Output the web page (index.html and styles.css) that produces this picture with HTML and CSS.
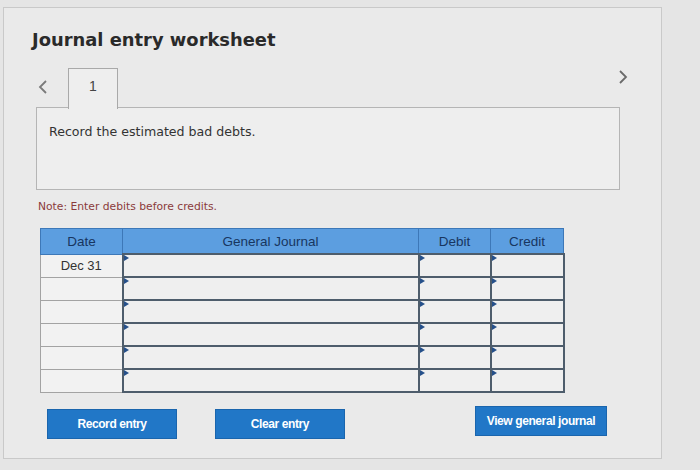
FILE: index.html
```html
<!DOCTYPE html>
<html>
<head>
<meta charset="utf-8">
<link rel="stylesheet" href="styles.css">
</head>
<body>
<div class="panel">
  <h1 class="title">Journal entry worksheet</h1>
  <div class="inner">
    <div class="tabrow">
      <span class="arrow arrow-left"><svg width="10" height="16" viewBox="0 0 10 16"><path d="M8 2 L2 8 L8 14" fill="none" stroke="#7a7a7a" stroke-width="1.8"/></svg></span>
      <div class="tab">1</div>
      <span class="arrow arrow-right"><svg width="10" height="16" viewBox="0 0 10 16"><path d="M2 2 L8 8 L2 14" fill="none" stroke="#6a6a6a" stroke-width="1.8"/></svg></span>
    </div>
    <div class="prompt">Record the estimated bad debts.</div>
    <div class="note">Note: Enter debits before credits.</div>
    <table class="journal">
      <thead>
        <tr><th class="c-date">Date</th><th class="c-gj">General Journal</th><th class="c-dr">Debit</th><th class="c-cr">Credit</th></tr>
      </thead>
      <tbody>
        <tr><td class="date">Dec 31</td><td class="inp"></td><td class="inp"></td><td class="inp"></td></tr>
        <tr><td class="date"></td><td class="inp"></td><td class="inp"></td><td class="inp"></td></tr>
        <tr><td class="date"></td><td class="inp"></td><td class="inp"></td><td class="inp"></td></tr>
        <tr><td class="date"></td><td class="inp"></td><td class="inp"></td><td class="inp"></td></tr>
        <tr><td class="date"></td><td class="inp"></td><td class="inp"></td><td class="inp"></td></tr>
        <tr><td class="date"></td><td class="inp"></td><td class="inp"></td><td class="inp"></td></tr>
      </tbody>
    </table>
    <div class="buttons">
      <button class="btn">Record entry</button>
      <button class="btn">Clear entry</button>
      <button class="btn btn-view">View general journal</button>
    </div>
  </div>
</div>
</body>
</html>
```
FILE: styles.css
```css
html, body {
  margin: 0;
  padding: 0;
}
body {
  background: #e5e5e5;
  width: 700px;
  height: 470px;
  overflow: hidden;
  font-family: "DejaVu Sans", Verdana, sans-serif;
}
.panel {
  box-sizing: border-box;
  margin: 7px 0 0 3px;
  width: 659px;
  height: 452px;
  border: 1px solid #c9c9c9;
  background: #eaeaea;
}
.title {
  margin: 0;
  padding: 20px 0 0 28px;
  font-size: 17.9px;
  line-height: 24px;
  font-weight: bold;
  color: #2a2a2a;
}
.inner {
  padding-left: 32px;
}
.tabrow {
  display: flex;
  align-items: center;
  margin-top: 15px;
  height: 40px;
  width: 600px;
}
.arrow {
  display: flex;
}
.arrow-left {
  width: 32px;
  padding-left: 2px;
  box-sizing: border-box;
}
.arrow-right {
  margin-left: auto;
  align-self: flex-start;
  margin-top: 2px;
  margin-right: 8px;
}
.tab {
  position: relative;
  z-index: 1;
  box-sizing: border-box;
  width: 50px;
  height: 41px;
  margin-top: 1px;
  align-self: flex-start;
  border: 1px solid #a9a9a9;
  border-bottom: none;
  background: #eeeeee;
  text-align: center;
  font-family: "Liberation Sans", Arial, sans-serif;
  font-size: 14px;
  line-height: 34px;
  color: #444;
}
.prompt {
  box-sizing: border-box;
  width: 584px;
  height: 83px;
  border: 1px solid #b5b5b5;
  background: #eeeeee;
  padding: 15px 0 0 12px;
  font-size: 12.6px;
  line-height: 18px;
  color: #333;
}
.note {
  margin-top: 10px;
  padding-left: 2px;
  font-size: 10.75px;
  line-height: 14px;
  color: #8a3b3b;
}
.journal {
  margin: 14px 0 0 4px;
  border-collapse: collapse;
  font-family: "Liberation Sans", Arial, sans-serif;
  font-size: 13px;
  table-layout: fixed;
  width: 519px;
}
.c-date { width: 81px; }
.c-gj { width: 295px; }
.c-dr { width: 71px; }
.c-cr { width: 72px; }
.journal th {
  height: 24px;
  padding: 0;
  background: #5c9ee0;
  border: 1px solid #3d78b8;
  color: #183660;
  font-size: 13.5px;
  font-weight: normal;
  text-align: center;
}
.journal td {
  height: 21px;
  padding: 0;
}
.journal td.date {
  background: #f2f2f2;
  border: 1px solid #a3a3a3;
  text-align: center;
  color: #333;
}
.journal td.inp {
  position: relative;
  background: #efefef;
  border: 2px solid #4e5d6c;
}
.journal td.inp::before {
  content: "";
  position: absolute;
  top: 0;
  left: 0;
  border-left: 5px solid #26508a;
  border-top: 3px solid transparent;
  border-bottom: 3px solid transparent;
}
.buttons {
  display: flex;
  margin-top: 16px;
  padding-left: 11px;
}
.btn {
  width: 130px;
  height: 30px;
  border: 1px solid #1a65ad;
  background: #2177c7;
  color: #fff;
  font-family: "Liberation Sans", Arial, sans-serif;
  font-size: 12px;
  font-weight: bold;
  letter-spacing: -0.4px;
  padding: 0;
}
.btn + .btn {
  margin-left: 38px;
}
.btn.btn-view {
  margin-left: 130px;
  width: 132px;
  margin-top: -3px;
}
```
